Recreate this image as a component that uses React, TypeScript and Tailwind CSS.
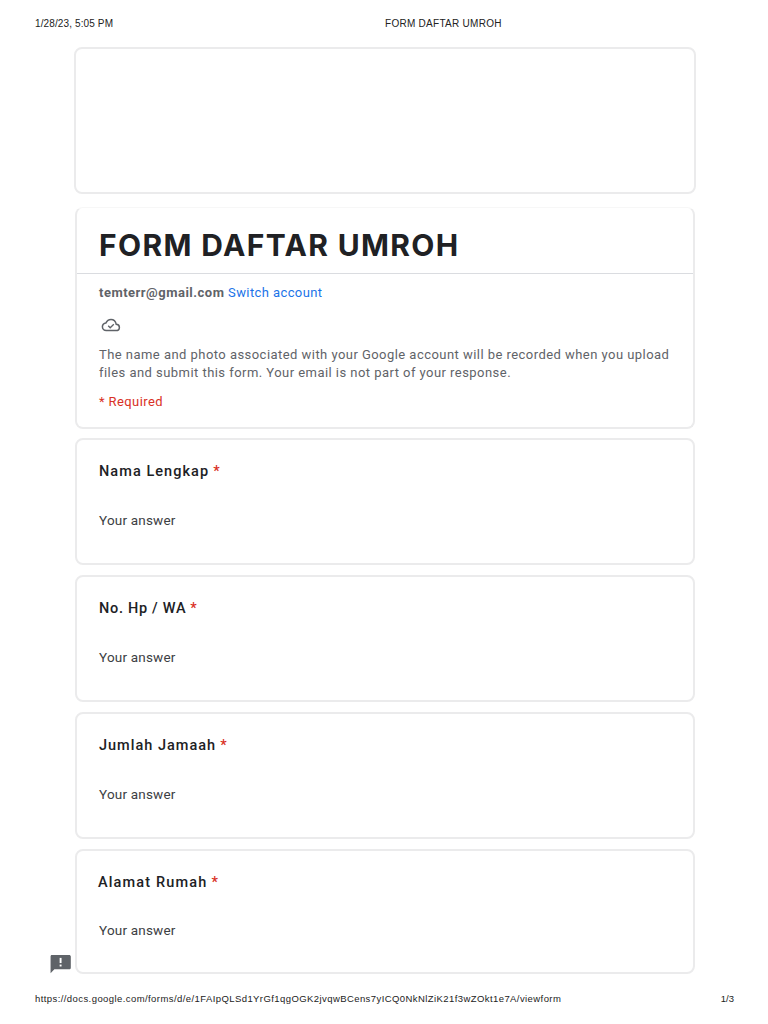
import { ReactNode } from 'react'

const questions = [
  { label: 'Nama Lengkap', height: 'h-[127px]', labelClass: 'pl-[22px] tracking-[1.05px]', answerClass: 'pt-[28px]' },
  { label: 'No. Hp / WA', height: 'h-[127px]', labelClass: 'pl-[22px] tracking-[0.7px]', answerClass: 'pt-[28px]' },
  { label: 'Jumlah Jamaah', height: 'h-[127px]', labelClass: 'pl-[22px] tracking-[1px]', answerClass: 'pt-[28px]' },
  { label: 'Alamat Rumah', height: 'h-[125px]', labelClass: 'pl-[21px] tracking-[1.15px]', answerClass: 'pt-[27px]' },
]

function Card({ className, children }: { className: string; children?: ReactNode }) {
  return (
    <div className={`rounded-[8px] border-2 border-[#ebebec] bg-white ${className}`}>{children}</div>
  )
}

function CloudCheck() {
  return (
    <svg width="20" height="16" viewBox="0 0 20 16" fill="none" stroke="#5f6368" strokeWidth="1.5">
      <path d="M5.2 13.6h9.6c2 0 3.6-1.3 3.6-3.2 0-1.8-1.4-3.1-3.2-3.2C14.6 4.4 12.6 2.4 10 2.4 7.8 2.4 5.9 3.7 5 5.9 3 6.2 1.4 7.8 1.4 9.8c0 2.1 1.7 3.8 3.8 3.8z" />
      <path d="M7.2 8.8l2 2 3.6-3.6" strokeWidth="1.3" />
    </svg>
  )
}

function FeedbackIcon() {
  return (
    <svg width="21" height="20" viewBox="0 0 22 20">
      <path fill="#5f6368" d="M2 0.5h18c1 0 1.8.7 1.8 1.7v11.6c0 1-.8 1.7-1.8 1.7H4.6L.6 19.6V2.2C.6 1.2 1 .5 2 .5z" />
      <rect x="10.1" y="3.6" width="2" height="5.4" fill="#fff" />
      <rect x="10.1" y="10.6" width="2" height="2" fill="#fff" />
    </svg>
  )
}

export default function App() {
  return (
    <div className="flex h-[1024px] w-[768px] flex-col overflow-hidden bg-white font-['Roboto',sans-serif]">
      <div className="relative flex h-[47px] shrink-0 items-start pl-[35px] pt-[18px] font-['Liberation_Sans',sans-serif] text-[10px] leading-[12px] text-[#222]">
        <span className="tracking-[0.12px]">1/28/23, 5:05 PM</span>
        <span className="absolute left-[385px] tracking-[0.28px]">FORM DAFTAR UMROH</span>
      </div>

      <div className="flex flex-col pl-[74px]">
        <Card className="h-[147px] w-[622px]" />

        <div className="ml-[1px] mt-[13px] h-[222px] w-[620px] rounded-[8px] border-x-2 border-b-2 border-[#ebebec] [border-top:1px_solid_#f7f7f7]">
          <div className="flex h-[66px] items-center border-b border-[#dadce0] pl-[22px]">
            <h1 className="pt-[9px] font-['Inter',sans-serif] text-[30px] font-bold leading-[38px] tracking-[1.35px] text-[#202124]">
              FORM DAFTAR UMROH
            </h1>
          </div>
          <div className="pl-[22px] pt-[10px]">
            <p className="text-[13px] leading-[18px] tracking-[0.4px]">
              <span className="font-bold tracking-[0.5px] text-[#5f6368]">temterr@gmail.com</span>{' '}
              <span className="text-[#1a73e8]">Switch account</span>
            </p>
            <div className="ml-[2px] mt-[15px] h-[16px]">
              <CloudCheck />
            </div>
            <p className="mt-[13px] w-[585px] text-[13px] leading-[18px] tracking-[0.455px] text-[#5f6368]">
              The name and photo associated with your Google account will be recorded when you upload files and submit this form. Your email is not part of your response.
            </p>
            <p className="mt-[11px] text-[13px] leading-[18px] tracking-[0.4px] text-[#d93025]">* Required</p>
          </div>
        </div>

        <div className="relative ml-[1px] mt-[9px] flex w-[620px] flex-col gap-[10px]">
          {questions.map((q) => (
            <Card key={q.label} className={`${q.height} w-[620px]`}>
              <p className={`${q.labelClass} pt-[22px] text-[14.5px] font-medium leading-[20px] text-[#202124]`}>
                {q.label}
                <span className="ml-[4px] text-[#d93025]">*</span>
              </p>
              <p className={`${q.answerClass} pl-[22px] text-[13.5px] leading-[20px] tracking-[0.2px] text-[#3c4043]`}>Your answer</p>
            </Card>
          ))}
          <div className="absolute bottom-0 left-[-25px]">
            <FeedbackIcon />
          </div>
        </div>
      </div>

      <div className="mt-[19px] flex justify-between pl-[35px] pr-[34px] font-['Liberation_Sans',sans-serif] text-[9.5px] leading-[12px] text-[#222]">
        <span className="tracking-[0.42px]">https://docs.google.com/forms/d/e/1FAIpQLSd1YrGf1qgOGK2jvqwBCens7yICQ0NkNlZiK21f3wZOkt1e7A/viewform</span>
        <span>1/3</span>
      </div>
    </div>
  )
}
